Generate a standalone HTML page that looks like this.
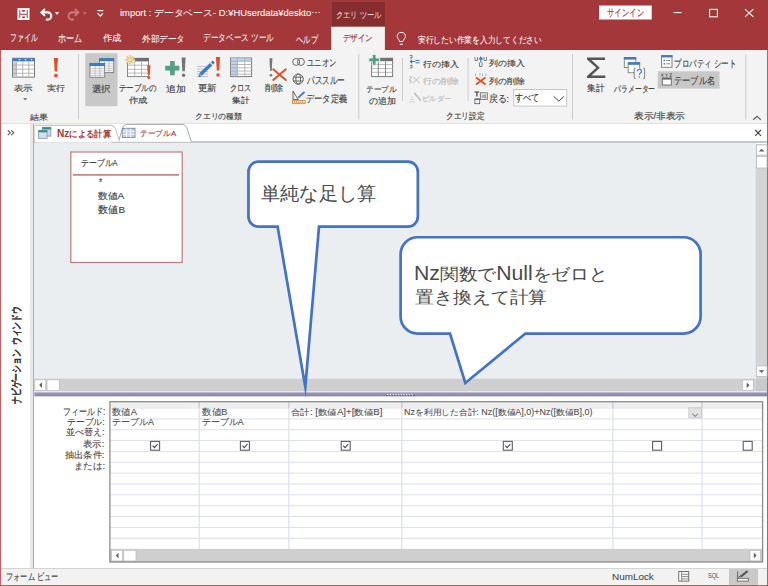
<!DOCTYPE html>
<html lang="ja"><head><meta charset="utf-8">
<style>
*{margin:0;padding:0;box-sizing:border-box}
html,body{width:768px;height:586px;overflow:hidden;background:#fff}
body{position:relative;font-family:"Liberation Sans",sans-serif;font-size:11px;color:#444}
.a{position:absolute;white-space:nowrap;line-height:1;transform-origin:0 0;-webkit-text-stroke:0.15px currentColor}
.b{position:absolute}
</style></head><body>
<!-- frame & bars -->
<div class="b" style="left:0;top:0;width:768px;height:50px;background:#A4373A"></div>
<div class="b" style="left:1px;top:50px;width:766px;height:73px;background:#F3F3F3"></div>
<div class="b" style="left:1px;top:122.5px;width:766px;height:1px;background:#E2E2E2"></div>
<div class="b" style="left:29.5px;top:123.5px;width:3.2px;height:444.5px;background:#E8E8E8"></div>
<div class="b" style="left:32.7px;top:123.5px;width:1.7px;height:444.5px;background:#A9AEB6"></div>
<div class="b" style="left:34.4px;top:141.3px;width:732.6px;height:1.5px;background:#C3C8CF"></div>
<div class="b" style="left:34.4px;top:142.8px;width:721.6px;height:236px;background:#EAEEF1"></div>
<!-- status -->
<div class="b" style="left:1px;top:568px;width:766px;height:17px;background:#F2F2F2;border-top:1px solid #D4D4D4"></div>
<div class="b" style="left:728.7px;top:569px;width:29.1px;height:16px;background:#C9C9C9"></div>
<div class="b" style="left:0;top:50px;width:1px;height:536px;background:#BD5E61"></div>
<div class="b" style="left:767px;top:50px;width:1px;height:536px;background:#BD5E61"></div>
<div class="b" style="left:0;top:585px;width:768px;height:1px;background:#BD5E61"></div>
<svg class="b" style="left:0;top:0" width="768" height="124">
 <!-- QAT -->
 <g fill="none" stroke="#fff" stroke-width="1.9">
  <rect x="18.4" y="9.1" width="10.2" height="9.9"/>
  <path d="M21.2 9.2v3.6h4.6V9.2"/><path d="M21.2 19v-3.4h4.6V19"/>
 </g>
 <g fill="none" stroke="#fff" stroke-width="2.1" stroke-linecap="round" stroke-linejoin="round">
  <path d="M41.5 12.4h6.2a3.6 3.6 0 0 1 0 7.2h-1"/><path d="M44.4 9.5l-2.9 2.9 2.9 2.9"/>
 </g>
 <path d="M54.8 12.3h4.6l-2.3 2.4z" fill="#fff"/>
 <g fill="none" stroke="#C5787A" stroke-width="2.1" stroke-linecap="round" stroke-linejoin="round">
  <path d="M78.3 12.4h-6.2a3.6 3.6 0 0 0 0 7.2h1"/><path d="M75.4 9.5l2.9 2.9-2.9 2.9"/>
 </g>
 <path d="M82.7 12.3h4l-2 2.2z" fill="#C5787A"/>
 <path d="M97.3 10.6h6" stroke="#fff" stroke-width="1.2"/>
 <path d="M97.6 13.1l2.7 3 2.7-3" fill="none" stroke="#fff" stroke-width="1.2"/>
 <!-- contextual -->
 <rect x="331.9" y="2" width="53" height="24.7" fill="#862D30"/>
 <rect x="331.2" y="26.7" width="53.7" height="23.8" fill="#F3F3F3"/>
 <!-- sign in & window buttons -->
 <rect x="599" y="5.5" width="52.7" height="14" fill="#fff"/>
 <path d="M673.5 12.6h8" stroke="#fff" stroke-width="1.1"/>
 <rect x="709.6" y="9.4" width="7.8" height="7.4" fill="none" stroke="#fff" stroke-width="1.1"/>
 <path d="M745 9.2l8.4 7.6M753.4 9.2L745 16.8" stroke="#fff" stroke-width="1.1"/>
 <!-- tell me bulb -->
 <g fill="none" stroke="#fff" stroke-width="1">
  <path d="M399.6 41.6c0-1.8-2.4-3-2.4-5.1a4.1 4.1 0 0 1 8.2 0c0 2.1-2.4 3.3-2.4 5.1z"/>
  <path d="M399.8 44.3h3"/>
 </g>
</svg>
<svg class="b" style="left:0;top:50px" width="768" height="74" viewBox="0 50 768 74">
 <!-- highlights -->
 <rect x="85.2" y="53.2" width="32.3" height="53" fill="#C8C8C8"/>
 <rect x="657.7" y="71.3" width="61.8" height="17.3" fill="#C8C8C8"/>
 <!-- separators -->
 <g fill="#CBCBCB">
  <rect x="78" y="54" width="1" height="65.5"/>
  <rect x="358.3" y="54" width="1" height="65.5"/>
  <rect x="402" y="58" width="1" height="43"/>
  <rect x="467.6" y="58" width="1" height="43"/>
  <rect x="572" y="54" width="1" height="65.5"/>
  <rect x="745.3" y="54" width="1" height="65.5"/>
 </g>
 <path d="M753.2 119.7l3.8-3.4 3.8 3.4" fill="none" stroke="#666" stroke-width="1.2"/>
 <!-- 表示 (datasheet) -->
 <rect x="12.5" y="58.3" width="22" height="18.8" fill="#fff" stroke="#7B7B7B" stroke-width="1"/>
 <rect x="12.5" y="58.3" width="22" height="3" fill="#3E7BC0"/>
 <rect x="13" y="61.3" width="3.4" height="15.3" fill="#BBD3EE"/>
 <g stroke="#A6A6A6" stroke-width="0.8">
  <path d="M16.4 61.3v15.5M22.7 61.3v15.5M28.8 61.3v15.5M13 65h21M13 69.2h21M13 73.3h21"/>
 </g>
 <g fill="#fff"><path d="M18.3 59.2h2.4l-1.2 1.4z M24.3 59.2h2.4l-1.2 1.4z M30.3 59.2h2.4l-1.2 1.4z"/></g>
 <path d="M23.2 98.3h4l-2 2z" fill="#555"/>
 <!-- 実行 ! -->
 <path d="M53.8 58h4.2l-0.9 13.6h-2.4z" fill="#E0512B"/>
 <circle cx="55.9" cy="75.6" r="1.9" fill="#E0512B"/>
 <!-- 選択 -->
 <rect x="99.5" y="58.6" width="14.2" height="14" fill="#fff" stroke="#7B7B7B" stroke-width="0.9"/>
 <g stroke="#B0B0B0" stroke-width="0.7"><path d="M99.5 63.8h14.2M99.5 66.1h14.2M99.5 68.4h14.2M99.5 70.6h14.2M104.4 61.3v11.3M109.1 61.3v11.3"/></g>
 <rect x="99.1" y="58.2" width="15" height="3.1" fill="#3E7BC0"/>
 <rect x="90" y="63.4" width="14.6" height="13.9" fill="#fff" stroke="#7B7B7B" stroke-width="0.9"/>
 <g stroke="#B0B0B0" stroke-width="0.7"><path d="M90 68.6h14.6M90 70.9h14.6M90 73.2h14.6M90 75.4h14.6M95 66.2v11.1M99.8 66.2v11.1"/></g>
 <rect x="89.6" y="63" width="15.3" height="3.1" fill="#3E7BC0"/>
 <!-- テーブルの作成 -->
 <rect x="127.5" y="58.3" width="21" height="18.3" fill="#fff" stroke="#7B7B7B" stroke-width="0.9"/>
 <rect x="134.8" y="58" width="14" height="3.4" fill="#6F6F6F"/>
 <g stroke="#A8A8A8" stroke-width="0.8"><path d="M127.5 65.2h21M127.5 69.3h21M127.5 73.1h21M134.7 61.4v15.2M141.5 61.4v15.2"/></g>
 <circle cx="129.9" cy="59.8" r="3.6" fill="#F3F3F3"/>
 <g stroke="#F0C060" stroke-width="1.5" stroke-linecap="round"><path d="M129.9 55.6v1.6M129.9 62.4v1.6M125.7 59.8h1.6M132.5 59.8h1.6M126.9 56.8l1.1 1.1M131.8 61.7l1.1 1.1M132.9 56.8l-1.1 1.1M128 61.7l-1.1 1.1"/></g>
 <circle cx="129.9" cy="59.8" r="1.9" fill="#fff" stroke="#F0C060" stroke-width="1.2"/>
 <path d="M147.1 65.2h3.4l-0.7 9.8h-2z" fill="#E0512B"/>
 <circle cx="148.8" cy="77.6" r="1.5" fill="#E0512B"/>
 <!-- 追加 -->
 <path d="M170.1 61h4.6v4.8h4.7v4.6h-4.7v4.8h-4.6v-4.8h-4.9v-4.6h4.9z" fill="#55A083"/>
 <path d="M181.6 57.6h4l-0.8 13.7h-2.4z" fill="#737373"/>
 <circle cx="183.6" cy="75.3" r="1.7" fill="#737373"/>
 <!-- 更新 -->
 <g stroke="#B8B8B8" stroke-width="0.8"><path d="M197 66.5h9M197 69h11M197 71.5h11M197 74h11M197 76.5h11"/></g>
 <path d="M199.2 73.3l10.8-10.3 2.4 2.4-10.8 10.3z" fill="#3E7BC0"/>
 <path d="M210.8 62.2l1-1a1.2 1.2 0 0 1 1.7 0l0.7 0.7a1.2 1.2 0 0 1 0 1.7l-1 1z" fill="#3E7BC0"/>
 <path d="M198.4 77.2l0.6-3.3 2.6 2.6z" fill="#3E7BC0"/>
 <path d="M215.9 57h4.2l-0.9 13.5h-2.4z" fill="#E0512B"/>
 <circle cx="218" cy="75" r="1.8" fill="#E0512B"/>
 <!-- クロス集計 -->
 <rect x="230.6" y="58" width="21" height="18.6" fill="#fff" stroke="#7B7B7B" stroke-width="1"/>
 <rect x="231.1" y="58.5" width="20" height="2.8" fill="#BCD2EC"/>
 <rect x="231.1" y="58.5" width="6.3" height="17.6" fill="#BCD2EC"/>
 <g stroke="#A8A8A8" stroke-width="0.8"><path d="M230.6 61.3h21M230.6 64.5h21M230.6 67.8h21M230.6 71h21M230.6 74.2h21M237.4 58v18.6M244.8 58v18.6"/></g>
 <!-- 削除 -->
 <path d="M269.4 58.3h3l-0.7 12.6h-1.6z" fill="#777"/>
 <circle cx="270.9" cy="75.3" r="1.3" fill="#777"/>
 <path d="M273.2 69.3l12.6 10.6M285.8 69.3l-12.6 10.6" stroke="#E0512B" stroke-width="2" stroke-linecap="round"/>
 <!-- ユニオン / パススルー / データ定義 -->
 <g fill="none" stroke="#5A5A5A" stroke-width="0.9">
  <circle cx="296.2" cy="61.9" r="3.5"/><circle cx="300.9" cy="61.9" r="3.5"/>
  <circle cx="298.2" cy="79.1" r="5.1"/><ellipse cx="298.2" cy="79.1" rx="2.3" ry="5.1"/>
  <path d="M293.4 77.2h9.6M293.4 81h9.6"/>
 </g>
 <rect x="292.4" y="100.6" width="12.8" height="3" fill="#FBE0C8" stroke="#E8893A" stroke-width="0.9"/>
 <path d="M294.5 101.6v1.2M296.5 101.6v1.2M298.5 101.6v1.2M300.5 101.6v1.2M302.5 101.6v1.2" stroke="#B8743A" stroke-width="0.7"/>
 <path d="M293 91v8.6h5.2z" fill="none" stroke="#555" stroke-width="0.9"/>
 <path d="M297.6 98.6l0.7-2.2 5.6-5.2 1.3 1.3-5.6 5.2z" fill="#3E7BC0"/>
 <!-- テーブルの追加 -->
 <rect x="371.6" y="58.4" width="21" height="18.2" fill="#fff" stroke="#7B7B7B" stroke-width="1"/>
 <rect x="379.8" y="57.9" width="13.1" height="3.3" fill="#727272"/>
 <g stroke="#B0B0B0" stroke-width="0.9"><path d="M371.6 64.6h21M371.6 68.6h21M371.6 72.3h21"/></g>
 <g stroke="#7B7B7B" stroke-width="0.9"><path d="M378.3 61.2v15.4M385.5 61.2v15.4"/></g>
 <path d="M372.3 54.4h3.7v3.6h3.6v3.7h-3.6v3.6h-3.7v-3.6h-3.6v-3.7h3.6z" fill="#55A083" stroke="#F3F3F3" stroke-width="0.9"/>
 <!-- 行の挿入 -->
 <g stroke="#555" stroke-width="0.8" fill="none"><path d="M409.9 55.4h2.1v2.5h-2.1M409.9 65.4h2.1v2.5h-2.1"/></g>
 <path d="M411.5 61.6h3.8M415.6 60.4h4M415.6 62.8h4" stroke="#3E7BC0" stroke-width="1"/>
 <path d="M409.5 61.6l2.6-2.3v4.6z" fill="#3E7BC0"/>
 <!-- 行の削除 (disabled) -->
 <g stroke="#BDBDBD" stroke-width="1" fill="none"><path d="M409.4 76.6h1.8v2.2h-1.4v1.8h1.4v2.2h-1.8"/><path d="M413 76.6l6.8 6.6M419.8 76.6l-6.8 6.6"/></g>
 <!-- ビルダー (disabled) -->
 <path d="M414.3 92.8l6.5 7.8" stroke="#C2C2C2" stroke-width="1.7"/>
 <g fill="#C8C8C8"><rect x="409.3" y="101.3" width="1.2" height="1.2"/><rect x="411.4" y="101.3" width="1.2" height="1.2"/><rect x="413.5" y="101.3" width="1.2" height="1.2"/><rect x="410.4" y="99" width="1.2" height="1.2"/><rect x="412.5" y="99" width="1.2" height="1.2"/><rect x="411.5" y="96.7" width="1.2" height="1.2"/></g>
 <!-- 列の挿入 -->
 <g stroke="#666" stroke-width="0.8" fill="none"><path d="M475 57v3.5h2.5V57M484 57v3.5h2.5V57M479.5 62.5v4h2.5v-4"/></g>
 <path d="M480.8 57.5v5" stroke="#3E7BC0" stroke-width="1.2"/><path d="M478.3 59.5l2.5-3.2 2.5 3.2z" fill="#3E7BC0"/>
 <!-- 列の削除 -->
 <g stroke="#7FA7D8" stroke-width="0.8" fill="none"><path d="M475.5 73.5v2.5M480 73.5v2.5M482.5 73.5v2.5M486 73.5v2.5"/></g>
 <path d="M476 77.5l9.5 7M485.5 77.5l-9.5 7" stroke="#E0512B" stroke-width="1.8"/>
 <!-- 戻る -->
 <path d="M474.6 92h4.6M476.9 92v4.4" stroke="#333" stroke-width="1.1"/>
 <rect x="480.3" y="92.8" width="7" height="6.6" fill="#E8E8E8" stroke="#666" stroke-width="0.8"/>
 <path d="M482.2 95.2v2.4M483.8 95.2h1.6v2.4h-1.6z" fill="none" stroke="#555" stroke-width="0.6"/>
 <rect x="474.9" y="98.9" width="4.8" height="4.8" fill="#fff" stroke="#555" stroke-width="0.8"/>
 <rect x="474.9" y="98.7" width="4.8" height="1.3" fill="#3E7BC0"/>
 <!-- combo -->
 <rect x="513.7" y="89.5" width="53" height="16.6" fill="#fff" stroke="#C6C6C6" stroke-width="1"/>
 <path d="M553.6 96.3l5.2 4.8 5.2-4.8" fill="none" stroke="#444" stroke-width="1"/>
 <!-- Σ -->
 <path d="M587 57.4h18v2.6h-13.6l8.4 7.8-8.4 7.6h13.9v2.6h-18.3v-2.1l9.4-8.1-9.4-8.2z" fill="#555"/>
 <!-- パラメーター -->
 <rect x="624.3" y="57.5" width="11.5" height="10" fill="#fff" stroke="#808080" stroke-width="0.9"/>
 <rect x="623.9" y="57" width="12.3" height="2.6" fill="#3E7BC0"/>
 <rect x="628.2" y="62.7" width="11.5" height="10" fill="#fff" stroke="#808080" stroke-width="0.9"/>
 <rect x="627.8" y="62.2" width="12.3" height="2.6" fill="#3E7BC0"/>
 <rect x="634.2" y="68" width="10.4" height="10.4" fill="#F3F3F3"/>
 <path d="M635.6 68.2h-1.4v10.2h1.4M643.2 68.2h1.4v10.2h-1.4" fill="none" stroke="#777" stroke-width="0.9"/>
 <path d="M637.3 71.3a2.1 2.1 0 1 1 3 1.9c-0.8 0.4-0.9 0.9-0.9 1.8" fill="none" stroke="#3E7BC0" stroke-width="1.2"/>
 <circle cx="639.4" cy="77" r="0.75" fill="#3E7BC0"/>
 <!-- プロパティシート -->
 <rect x="661.6" y="55.6" width="10.4" height="11.7" fill="#fff" stroke="#777" stroke-width="0.9"/>
 <rect x="661.2" y="55.2" width="11.2" height="2.2" fill="#3E7BC0"/>
 <g stroke="#666" stroke-width="0.8"><path d="M663.5 60.5h1.6M664.3 59.7v1.6M666.3 60.5h3.8M663.5 63.8h1.6M664.3 63v1.6M666.3 63.8h3.8"/></g>
 <!-- テーブル名 -->
 <g fill="none" stroke="#555" stroke-width="0.75"><path d="M661.3 73.7l2 2.8M663.3 73.7l-2 2.8M665.6 73.7l1 1.4 1-1.4M666.6 75.1v1.4M669.8 73.7h2l-2 2.8h2"/></g>
 <rect x="662.3" y="78" width="9" height="7" fill="#fff" stroke="#666" stroke-width="0.9"/>
 <rect x="662.3" y="78" width="9" height="1.6" fill="#666"/>
</svg>
<svg class="b" style="left:0;top:120px" width="768" height="466" viewBox="0 120 768 466">
 <!-- nav >> -->
 <path d="M7.8 130.4l2.5 2.4-2.5 2.4M11.2 130.4l2.5 2.4-2.5 2.4" fill="none" stroke="#555" stroke-width="1.1"/>
 <!-- doc tabs -->
 <path d="M118.5 141.8l3.6-12.5c0.8-3 2.2-4.9 5-4.9h55c3 0 4.2 2 5.2 4.6l4 12.8" fill="#fff" stroke="#A9A9A9" stroke-width="1"/>
 <path d="M34.8 142V125.4h75.8c2.6 0 4.2 1.6 5 4l4 12.3" fill="#fff" stroke="#D6C6AE" stroke-width="1.1"/>
 <rect x="35.3" y="126" width="76" height="16.5" fill="#fff"/>
 <!-- query icon -->
 <rect x="42.3" y="127.3" width="8.6" height="8.8" fill="#C9D6E3" stroke="#7D93AA" stroke-width="0.8"/>
 <rect x="42.3" y="127.2" width="8.6" height="2.2" fill="#3B8C92"/>
 <rect x="38.6" y="130.3" width="8.5" height="8" fill="#D7E1EB" stroke="#7D93AA" stroke-width="0.8"/>
 <rect x="38.6" y="130.2" width="8.5" height="2.2" fill="#3B8C92"/>
 <!-- table icon tab2 -->
 <rect x="122.3" y="128.3" width="12.7" height="9.2" fill="#C4D1E6" stroke="#6F87B5" stroke-width="0.9"/>
 <g stroke="#fff" stroke-width="0.8"><path d="M122.5 131.3h12.5M122.5 134.3h12.5M126.5 128.5v9M130.6 128.5v9"/></g>
 <!-- close x -->
 <path d="M755.2 130l5.8 5.8M761 130l-5.8 5.8" stroke="#444" stroke-width="1.15"/>
 <!-- table box -->
 <rect x="70.8" y="152" width="111.4" height="110.5" fill="#fff" stroke="#C3787B" stroke-width="1.2"/>
 <path d="M73 174.9h106" stroke="#C98486" stroke-width="1.6"/>
 <!-- v scrollbar -->
 <rect x="755.8" y="144" width="11.2" height="235" fill="#D4D4D4"/>
 <rect x="756.6" y="144.9" width="10.4" height="10.2" fill="#fff" stroke="#BDBDBD" stroke-width="0.8"/>
 <path d="M758.8 151.5h5.6l-2.8-2.8z" fill="#606060"/>
 <rect x="756.6" y="156.4" width="10.4" height="11.6" fill="#fff" stroke="#BDBDBD" stroke-width="0.8"/>
 <rect x="756.4" y="365.9" width="10.6" height="10.5" fill="#fff" stroke="#BDBDBD" stroke-width="0.8"/>
 <path d="M758.8 370.2h5.6l-2.8 2.8z" fill="#606060"/>
 <!-- h scrollbar -->
 <rect x="34.4" y="378.7" width="721.4" height="12.7" fill="#CFCFCF"/>
 <rect x="755.8" y="378.7" width="11.2" height="12.7" fill="#C7C9CC"/>
 <rect x="34.8" y="379.8" width="11" height="10.8" fill="#fff" stroke="#BDBDBD" stroke-width="0.8"/>
 <path d="M42 382.3v5.6l-2.8-2.8z" fill="#606060"/>
 <rect x="47" y="379.8" width="12.3" height="10.8" fill="#fff" stroke="#BDBDBD" stroke-width="0.8"/>
 <rect x="742.5" y="380" width="10.8" height="10.5" fill="#fff" stroke="#BDBDBD" stroke-width="0.8"/>
 <path d="M746.7 382.4v5.6l2.8-2.8z" fill="#606060"/>
 <rect x="34.4" y="391.4" width="732.6" height="1.2" fill="#E4E4E4"/>
 <!-- splitter -->
 <rect x="34.4" y="392.6" width="732.6" height="3.8" fill="#8E8BAE"/>
 <rect x="34.4" y="392.6" width="732.6" height="0.8" fill="#A7A5C2"/>
 <g fill="#fff" opacity="0.85">
  <rect x="387" y="393.9" width="1.3" height="1.5"/><rect x="389.7" y="393.9" width="1.3" height="1.5"/><rect x="392.4" y="393.9" width="1.3" height="1.5"/><rect x="395.1" y="393.9" width="1.3" height="1.5"/><rect x="397.8" y="393.9" width="1.3" height="1.5"/><rect x="400.5" y="393.9" width="1.3" height="1.5"/><rect x="403.2" y="393.9" width="1.3" height="1.5"/><rect x="405.9" y="393.9" width="1.3" height="1.5"/><rect x="408.6" y="393.9" width="1.3" height="1.5"/><rect x="411.3" y="393.9" width="1.3" height="1.5"/>
 </g>
 <g fill="#3A3A50" opacity="0.7">
  <rect x="386.4" y="394.9" width="1.2" height="1.2"/><rect x="389.1" y="394.9" width="1.2" height="1.2"/><rect x="391.8" y="394.9" width="1.2" height="1.2"/><rect x="394.5" y="394.9" width="1.2" height="1.2"/><rect x="397.2" y="394.9" width="1.2" height="1.2"/><rect x="399.9" y="394.9" width="1.2" height="1.2"/><rect x="402.6" y="394.9" width="1.2" height="1.2"/><rect x="405.3" y="394.9" width="1.2" height="1.2"/><rect x="408" y="394.9" width="1.2" height="1.2"/><rect x="410.7" y="394.9" width="1.2" height="1.2"/><rect x="413.4" y="394.9" width="1.2" height="1.2"/>
 </g>
 <!-- grid -->
 <rect x="110" y="401.8" width="652.5" height="5.4" fill="#EFEFEF"/>
 <g stroke="#DCE0EB" stroke-width="1">
  <path d="M110 408h652.5M110 418.9h652.5M110 429.7h652.5M110 440.6h652.5M110 451.4h652.5M110 462.3h652.5M110 473.1h652.5M110 484h652.5M110 494.8h652.5M110 505.7h652.5M110 516.5h652.5M110 527.4h652.5M110 538.2h652.5"/>
 </g>
 <g stroke="#D9DDE8" stroke-width="1.1">
  <path d="M199.2 402v146.8M288.9 402v146.8M401.8 402v146.8M612.9 402v146.8M702.1 402v146.8"/>
 </g>
 <g stroke="#C8C8C8" stroke-width="1.1">
  <path d="M199.2 402v6M288.9 402v6M401.8 402v6M612.9 402v6M702.1 402v6"/>
 </g>
 <!-- dropdown in col5 -->
 <rect x="688.8" y="407.8" width="12.7" height="10" fill="#E3E3E3" stroke="#C3C3C3" stroke-width="0.8"/>
 <path d="M692.3 413.8l2.8 2.6 2.8-2.6" fill="none" stroke="#555" stroke-width="0.9"/>
 <!-- checkboxes -->
 <g fill="#fff" stroke="#5E5E5E" stroke-width="1.1">
  <rect x="150.6" y="441.4" width="9" height="8.8"/>
  <rect x="240.4" y="441.4" width="9" height="8.8"/>
  <rect x="341.2" y="441.4" width="9" height="8.8"/>
  <rect x="503.3" y="441.4" width="9" height="8.8"/>
  <rect x="652.6" y="441.4" width="9" height="8.8"/>
  <rect x="743.2" y="441.4" width="9" height="8.8"/>
 </g>
 <g fill="none" stroke="#444" stroke-width="1.1">
  <path d="M152.6 445.6l1.9 2 3.2-3.6"/>
  <path d="M242.4 445.6l1.9 2 3.2-3.6"/>
  <path d="M343.2 445.6l1.9 2 3.2-3.6"/>
  <path d="M505.3 445.6l1.9 2 3.2-3.6"/>
 </g>
 <!-- grid hscroll -->
 <rect x="110" y="548.8" width="652.5" height="13.2" fill="#CFCFCF"/>
 <rect x="111.4" y="550.2" width="11.3" height="10.8" fill="#fff" stroke="#BDBDBD" stroke-width="0.8"/>
 <path d="M118.5 552.8v5.6l-2.8-2.8z" fill="#606060"/>
 <rect x="123.7" y="550.2" width="12.3" height="10.8" fill="#fff" stroke="#BDBDBD" stroke-width="0.8"/>
 <rect x="750" y="550.4" width="10.3" height="10.5" fill="#fff" stroke="#BDBDBD" stroke-width="0.8"/>
 <path d="M753.8 552.8v5.6l2.8-2.8z" fill="#606060"/>
 <rect x="109.9" y="401.7" width="652.7" height="160.3" fill="none" stroke="#8C8C8C" stroke-width="1.3"/>
 <!-- status icons -->
 <rect x="678.7" y="571.5" width="10" height="9.6" fill="#fff" stroke="#6E6E6E" stroke-width="1"/>
 <g stroke="#6E6E6E" stroke-width="0.8"><path d="M681.6 571.8v9M682 574.3h6.5M682 576.6h6.5M682 578.9h6.5"/></g>
 <g fill="none" stroke="#5A5A5A" stroke-width="0.9"><path d="M737.6 571.2v6.6l3.8-2.6"/></g>
 <path d="M740 577.8l0.8-2.6 6-5 1.6 1.6-6 5z" fill="#5A5A5A"/>
 <rect x="737.3" y="578.3" width="11" height="2.8" fill="#F4F4F4" stroke="#5A5A5A" stroke-width="0.8"/>
 <!-- callouts -->
 <path d="M258.45 161.7H407.85A10 10 0 0 1 417.85 171.7V216.6A10 10 0 0 1 407.85 226.6H319L305.3 387L277.6 226.6H258.45A10 10 0 0 1 248.45 216.6V171.7A10 10 0 0 1 258.45 161.7Z" fill="#fff" stroke="#4472C4" stroke-width="2.7" stroke-miterlimit="30"/>
 <path d="M417.6 237.25H683.6A17 17 0 0 1 700.6 254.25V316.55A17 17 0 0 1 683.6 333.55H525.4L465.3 383L450 333.55H417.6A17 17 0 0 1 400.6 316.55V254.25A17 17 0 0 1 417.6 237.25Z" fill="#fff" stroke="#4472C4" stroke-width="2.7" stroke-miterlimit="30"/>
</svg>

<div class="a" style="left:119.60px;top:9.10px;font-size:8.58px;color:#fff;transform:scaleX(1.095);-webkit-text-stroke:0.05px currentColor">import : データベース- D:¥HUserdata¥deskto⋯</div>
<div class="a" style="left:335.70px;top:11.00px;font-size:8.8px;color:#F3D9DA;transform:scaleX(0.804);-webkit-text-stroke:0.05px currentColor">クエリ ツール</div>
<div class="a" style="left:607.00px;top:7.75px;font-size:9.72px;color:#A4373A;transform:scaleX(0.745);">サインイン</div>
<div class="a" style="left:9.91px;top:33.10px;font-size:9.68px;color:#fff;transform:scaleX(0.690);-webkit-text-stroke:0.05px currentColor">ファイル</div>
<div class="a" style="left:58.00px;top:33.10px;font-size:10.76px;color:#fff;transform:scaleX(0.737);-webkit-text-stroke:0.05px currentColor">ホーム</div>
<div class="a" style="left:103.00px;top:34.00px;font-size:9.0px;color:#fff;transform:scaleX(1.033);-webkit-text-stroke:0.05px currentColor">作成</div>
<div class="a" style="left:141.90px;top:35.00px;font-size:9.0px;color:#fff;transform:scaleX(0.952);-webkit-text-stroke:0.05px currentColor">外部データ</div>
<div class="a" style="left:202.53px;top:33.00px;font-size:9.9px;color:#fff;transform:scaleX(0.765);-webkit-text-stroke:0.05px currentColor">データベース ツール</div>
<div class="a" style="left:296.00px;top:35.10px;font-size:9.68px;color:#fff;transform:scaleX(0.733);-webkit-text-stroke:0.05px currentColor">ヘルプ</div>
<div class="a" style="left:343.00px;top:33.90px;font-size:9.1px;color:#A4373A;transform:scaleX(0.829);">デザイン</div>
<div class="a" style="left:418.00px;top:36.00px;font-size:8.8px;color:#fff;transform:scaleX(0.861);-webkit-text-stroke:0.05px currentColor">実行したい作業を入力してください</div>
<div class="a" style="left:13.90px;top:84.00px;font-size:8.3px;color:#444;transform:scaleX(1.181);">表示</div>
<div class="a" style="left:47.00px;top:84.00px;font-size:8.3px;color:#444;transform:scaleX(1.125);">実行</div>
<div class="a" style="left:30.00px;top:113.50px;font-size:8.25px;color:#444;transform:scaleX(1.125);">結果</div>
<div class="a" style="left:91.70px;top:84.90px;font-size:8.6px;color:#444;transform:scaleX(1.044);">選択</div>
<div class="a" style="left:118.70px;top:84.00px;font-size:9.0px;color:#444;transform:scaleX(0.833);">テーブルの</div>
<div class="a" style="left:129.20px;top:96.30px;font-size:8.3px;color:#444;transform:scaleX(1.175);">作成</div>
<div class="a" style="left:165.50px;top:85.00px;font-size:9.35px;color:#444;transform:scaleX(1.106);">追加</div>
<div class="a" style="left:198.30px;top:84.00px;font-size:8.5px;color:#444;transform:scaleX(1.044);">更新</div>
<div class="a" style="left:229.70px;top:83.50px;font-size:8.8px;color:#444;transform:scaleX(0.800);">クロス</div>
<div class="a" style="left:231.90px;top:96.30px;font-size:8.3px;color:#444;transform:scaleX(1.081);">集計</div>
<div class="a" style="left:264.80px;top:83.80px;font-size:9.3px;color:#444;transform:scaleX(1.011);">削除</div>
<div class="a" style="left:307.00px;top:57.90px;font-size:9.9px;color:#444;transform:scaleX(0.738);">ユニオン</div>
<div class="a" style="left:307.00px;top:74.50px;font-size:10.76px;color:#444;transform:scaleX(0.689);">パススルー</div>
<div class="a" style="left:306.18px;top:93.50px;font-size:9.5px;color:#444;transform:scaleX(0.822);">データ定義</div>
<div class="a" style="left:195.03px;top:112.70px;font-size:8.0px;color:#444;transform:scaleX(0.972);">クエリの種類</div>
<div class="a" style="left:366.04px;top:85.90px;font-size:7.7px;color:#444;transform:scaleX(0.958);">テーブル</div>
<div class="a" style="left:369.00px;top:96.75px;font-size:9.07px;color:#444;">の追加</div>
<div class="a" style="left:423.00px;top:60.50px;font-size:8.0px;color:#444;transform:scaleX(1.113);">行の挿入</div>
<div class="a" style="left:423.00px;top:77.60px;font-size:8.2px;color:#B9B9B9;transform:scaleX(1.113);">行の削除</div>
<div class="a" style="left:421.94px;top:94.90px;font-size:7.3px;color:#B9B9B9;transform:scaleX(1.059);">ビルダー</div>
<div class="a" style="left:488.60px;top:60.30px;font-size:8.0px;color:#444;transform:scaleX(1.113);">列の挿入</div>
<div class="a" style="left:488.60px;top:77.60px;font-size:8.2px;color:#444;transform:scaleX(1.113);">列の削除</div>
<div class="a" style="left:489.00px;top:93.70px;font-size:9.57px;color:#444;transform:scaleX(0.877);">戻る:</div>
<div class="a" style="left:514.80px;top:93.00px;font-size:10.34px;color:#333;transform:scaleX(0.810);">すべて</div>
<div class="a" style="left:446.04px;top:111.80px;font-size:8.6px;color:#444;transform:scaleX(0.860);">クエリ設定</div>
<div class="a" style="left:586.70px;top:84.20px;font-size:8.6px;color:#444;transform:scaleX(0.961);">集計</div>
<div class="a" style="left:613.90px;top:84.50px;font-size:9.13px;color:#444;transform:scaleX(0.765);">パラメーター</div>
<div class="a" style="left:674.25px;top:59.20px;font-size:10.01px;color:#444;transform:scaleX(0.751);">プロパティ シート</div>
<div class="a" style="left:673.68px;top:75.50px;font-size:9.9px;color:#444;transform:scaleX(0.823);">テーブル名</div>
<div class="a" style="left:633.70px;top:112.10px;font-size:8.7px;color:#444;transform:scaleX(1.079);">表示/非表示</div>
<div class="a" style="left:57.30px;top:129.60px;font-size:9.2px;color:#A4373A;font-weight:700;transform:scaleX(0.931);-webkit-text-stroke:0"><span style="font-size:1.18em;line-height:0">Nz</span>による計算</div>
<div class="a" style="left:140.03px;top:129.90px;font-size:8.1px;color:#A4373A;transform:scaleX(0.968);">テーブルA</div>
<div class="a" style="left:80.70px;top:158.90px;font-size:8.5px;color:#444;transform:scaleX(0.876);">テーブルA</div>
<div class="a" style="left:99.30px;top:177.00px;font-size:11px;color:#444;transform:scaleX(0.750);">*</div>
<div class="a" style="left:98.40px;top:191.50px;font-size:9.35px;color:#444;transform:scaleX(1.087);">数値A</div>
<div class="a" style="left:98.40px;top:205.40px;font-size:9.9px;color:#444;">数値B</div>
<div class="a" style="left:260.70px;top:185.20px;font-size:18.6px;color:#4a4a4a;transform:scaleX(1.010);-webkit-text-stroke:0">単純な足し算</div>
<div class="a" style="left:414.10px;top:263.50px;font-size:17.4px;color:#4a4a4a;transform:scaleX(1.101);-webkit-text-stroke:0"><span style="font-size:1.11em">Nz</span>関数で<span style="font-size:1.11em">Null</span>をゼロと</div>
<div class="a" style="left:414.70px;top:288.70px;font-size:17.2px;color:#4a4a4a;transform:scaleX(1.112);-webkit-text-stroke:0">置き換えて計算</div>
<div class="a" style="left:62.70px;top:406.60px;font-size:10.25px;color:#444;transform:scaleX(0.798);-webkit-text-stroke:0.1px currentColor">フィールド:</div>
<div class="a" style="left:67.00px;top:418.40px;font-size:8.89px;color:#444;transform:scaleX(0.979);-webkit-text-stroke:0.1px currentColor">テーブル:</div>
<div class="a" style="left:66.00px;top:428.40px;font-size:9.1px;color:#444;transform:scaleX(1.005);-webkit-text-stroke:0.1px currentColor">並べ替え:</div>
<div class="a" style="left:83.40px;top:438.50px;font-size:9.44px;color:#444;transform:scaleX(1.040);-webkit-text-stroke:0.1px currentColor">表示:</div>
<div class="a" style="left:65.40px;top:449.50px;font-size:9.44px;color:#444;transform:scaleX(1.021);-webkit-text-stroke:0.1px currentColor">抽出条件:</div>
<div class="a" style="left:73.70px;top:461.60px;font-size:9.0px;color:#444;transform:scaleX(1.052);-webkit-text-stroke:0.1px currentColor">または:</div>
<div class="a" style="left:112.00px;top:407.60px;font-size:9.11px;color:#505050;transform:scaleX(1.042);-webkit-text-stroke:0.1px currentColor">数値A</div>
<div class="a" style="left:112.00px;top:418.40px;font-size:8.89px;color:#505050;-webkit-text-stroke:0.1px currentColor">テーブルA</div>
<div class="a" style="left:201.80px;top:407.60px;font-size:9.11px;color:#505050;transform:scaleX(1.062);-webkit-text-stroke:0.1px currentColor">数値B</div>
<div class="a" style="left:201.80px;top:418.40px;font-size:8.89px;color:#505050;-webkit-text-stroke:0.1px currentColor">テーブルA</div>
<div class="a" style="left:291.30px;top:408.60px;font-size:8.2px;color:#505050;transform:scaleX(1.182);-webkit-text-stroke:0.1px currentColor">合計: [数値A]+[数値B]</div>
<div class="a" style="left:404.30px;top:408.60px;font-size:8.2px;color:#505050;transform:scaleX(1.096);-webkit-text-stroke:0.1px currentColor">Nzを利用した合計: Nz([数値A],0)+Nz([数値B],0)</div>
<div class="a" style="left:11.30px;top:403.70px;font-size:11.33px;color:#333;font-weight:400;transform:rotate(-90deg) scaleX(0.710);-webkit-text-stroke:0.6px currentColor">ナビゲーション&ensp;ウィンドウ</div>
<div class="a" style="left:6.28px;top:572.00px;font-size:9.78px;color:#444;transform:scaleX(0.718);">フォーム ビュー</div>
<div class="a" style="left:611.50px;top:573.00px;font-size:9.38px;color:#444;transform:scaleX(1.055);-webkit-text-stroke:0.05px currentColor">NumLock</div>
<div class="a" style="left:708.00px;top:573.30px;font-size:6.84px;color:#555;transform:scaleX(0.823);-webkit-text-stroke:0.05px currentColor">SQL</div>
</body></html>
